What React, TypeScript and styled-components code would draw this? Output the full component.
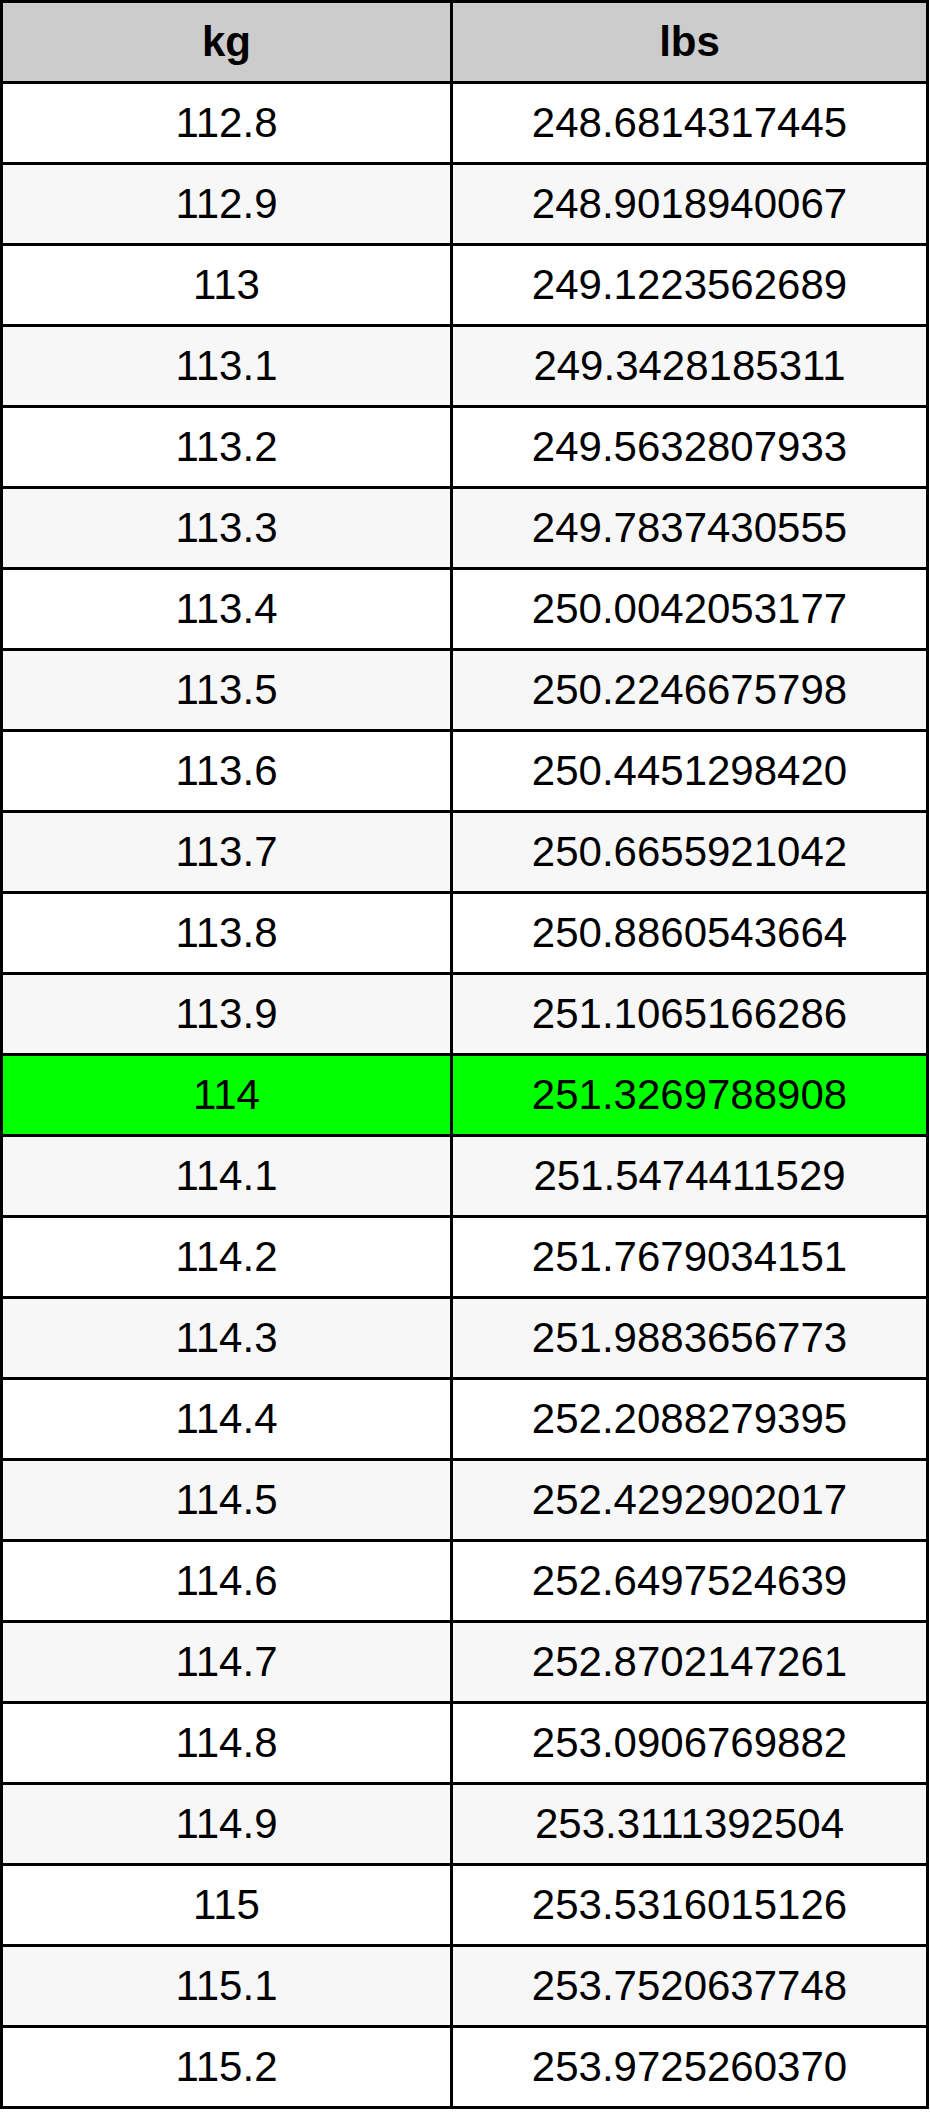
import { createGlobalStyle } from "styled-components";
import styled from "styled-components";

const GlobalStyle = createGlobalStyle`
  html, body {
    margin: 0;
    padding: 0;
    background: #ffffff;
  }
`;

const Table = styled.div`
  display: grid;
  grid-template-columns: 447px 473px;
  grid-auto-rows: 78px;
  gap: 3px;
  padding: 3px;
  width: 929px;
  box-sizing: border-box;
  background: #000000;
  font-family: "Liberation Sans", Arial, sans-serif;
  font-size: 42px;
  color: #000000;
`;

type Tone = "head" | "plain" | "alt" | "hit";

const tones: Record<Tone, string> = {
  head: "#cccccc",
  plain: "#ffffff",
  alt: "#f7f7f7",
  hit: "#00ff00",
};

const Cell = styled.div<{ $tone: Tone }>`
  display: flex;
  align-items: center;
  justify-content: center;
  background: ${(p) => tones[p.$tone]};
  font-weight: ${(p) => (p.$tone === "head" ? 700 : 400)};
  line-height: 1;
`;

const rows: [string, string][] = [
  ["112.8", "248.6814317445"],
  ["112.9", "248.9018940067"],
  ["113", "249.1223562689"],
  ["113.1", "249.3428185311"],
  ["113.2", "249.5632807933"],
  ["113.3", "249.7837430555"],
  ["113.4", "250.0042053177"],
  ["113.5", "250.2246675798"],
  ["113.6", "250.4451298420"],
  ["113.7", "250.6655921042"],
  ["113.8", "250.8860543664"],
  ["113.9", "251.1065166286"],
  ["114", "251.3269788908"],
  ["114.1", "251.5474411529"],
  ["114.2", "251.7679034151"],
  ["114.3", "251.9883656773"],
  ["114.4", "252.2088279395"],
  ["114.5", "252.4292902017"],
  ["114.6", "252.6497524639"],
  ["114.7", "252.8702147261"],
  ["114.8", "253.0906769882"],
  ["114.9", "253.3111392504"],
  ["115", "253.5316015126"],
  ["115.1", "253.7520637748"],
  ["115.2", "253.9725260370"],
];

export default function App() {
  return (
    <>
      <GlobalStyle />
      <Table>
        <Cell $tone="head">kg</Cell>
        <Cell $tone="head">lbs</Cell>
        {rows.map(([kg, lbs], i) => {
          const tone: Tone = kg === "114" ? "hit" : i % 2 === 0 ? "plain" : "alt";
          return [
            <Cell key={kg + "a"} $tone={tone}>{kg}</Cell>,
            <Cell key={kg + "b"} $tone={tone}>{lbs}</Cell>,
          ];
        })}
      </Table>
    </>
  );
}
